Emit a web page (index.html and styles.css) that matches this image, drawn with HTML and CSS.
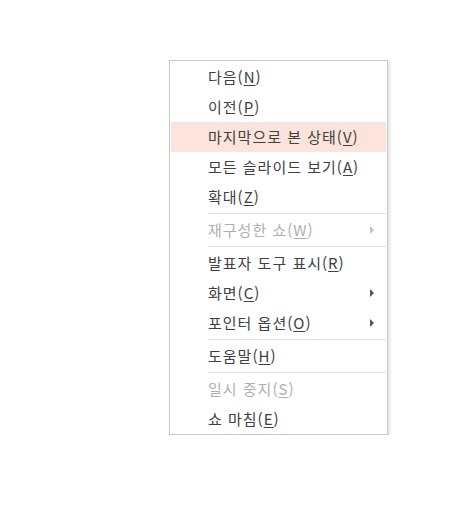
FILE: index.html
```html
<!DOCTYPE html>
<html lang="ko">
<head>
<meta charset="utf-8">
<link rel="stylesheet" href="styles.css">
</head>
<body>
<div class="menu">
  <div class="item"><span class="label">다음(<u>N</u>)</span></div>
  <div class="item"><span class="label">이전(<u>P</u>)</span></div>
  <div class="item hover"><span class="label">마지막으로 본 상태(<u>V</u>)</span></div>
  <div class="item"><span class="label">모든 슬라이드 보기(<u>A</u>)</span></div>
  <div class="item"><span class="label">확대(<u>Z</u>)</span></div>
  <div class="sep"></div>
  <div class="item disabled"><span class="label">재구성한 쇼(<u>W</u>)</span><span class="arrow"></span></div>
  <div class="sep"></div>
  <div class="item"><span class="label">발표자 도구 표시(<u>R</u>)</span></div>
  <div class="item"><span class="label">화면(<u>C</u>)</span><span class="arrow"></span></div>
  <div class="item"><span class="label">포인터 옵션(<u>O</u>)</span><span class="arrow"></span></div>
  <div class="sep"></div>
  <div class="item"><span class="label">도움말(<u>H</u>)</span></div>
  <div class="sep"></div>
  <div class="item disabled"><span class="label">일시 중지(<u>S</u>)</span></div>
  <div class="item"><span class="label">쇼 마침(<u>E</u>)</span></div>
</div>
</body>
</html>
```

FILE: styles.css
```css
html, body {
  margin: 0;
  padding: 0;
  background: #ffffff;
}
body {
  padding: 60px 0 0 169px;
  font-family: "Noto Sans CJK KR", "Noto Sans", sans-serif;
  font-size: 15px;
  color: #404040;
}
.menu {
  width: 215px;
  border: 1px solid #c8c8c8;
  background: #ffffff;
  padding: 1px 1px 0 1px;
  box-shadow: 2px 2px 3px rgba(0, 0, 0, 0.12);
  display: flex;
  flex-direction: column;
}
.item {
  height: 30px;
  display: flex;
  align-items: center;
  padding-left: 37px;
  padding-right: 12px;
  position: relative;
}
.item.hover {
  background: #fce4dc;
}
.label {
  flex: 1;
  line-height: 30px;
  white-space: nowrap;
  letter-spacing: 1px;
}
.label u {
  text-decoration: underline;
  text-underline-offset: 2px;
  text-decoration-thickness: 1px;
}
.item.disabled {
  color: #b0b0b0;
}
.arrow {
  width: 0;
  height: 0;
  border-top: 4px solid transparent;
  border-bottom: 4px solid transparent;
  border-left: 4px solid #555555;
}
.item.disabled .arrow {
  border-left-color: #c4c4c4;
}
.sep {
  height: 1px;
  background: #e2e2e2;
  margin: 1px 0 1px 37px;
}
```
